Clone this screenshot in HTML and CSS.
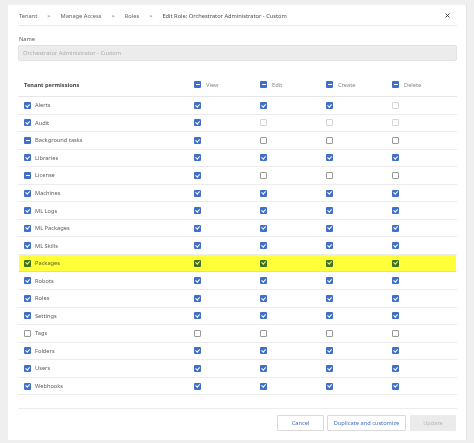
FILE: index.html
```html
<!DOCTYPE html>
<html lang="en">
<head>
<meta charset="utf-8">
<title>Edit Role</title>
<link rel="stylesheet" href="styles.css">
</head>
<body>
<div class="panel">
  <div class="crumbs">
    <span>Tenant</span><span class="sep">&gt;</span>
    <span>Manage Access</span><span class="sep">&gt;</span>
    <span>Roles</span><span class="sep">&gt;</span>
    <span class="cur">Edit Role: Orchestrator Administrator - Custom</span>
    <svg class="close" width="5" height="5" viewBox="0 0 5 5"><path d="M0.6 0.6 L4.4 4.4 M4.4 0.6 L0.6 4.4" stroke="#444" stroke-width="1"/></svg>
  </div>

  <div class="name-label">Name</div>
  <div class="input">Orchestrator Administrator - Custom</div>

  <div class="table">
    <div class="row head">
      <div class="c0 bold">Tenant permissions</div>
      <div class="cc"><span class="cb mid"></span><span class="hl-label">View</span></div>
      <div class="cc"><span class="cb mid"></span><span class="hl-label">Edit</span></div>
      <div class="cc"><span class="cb mid"></span><span class="hl-label">Create</span></div>
      <div class="cc"><span class="cb mid"></span><span class="hl-label">Delete</span></div>
    </div>

    <div class="row"><div class="c0"><span class="cb on"></span>Alerts</div><div class="cc"><span class="cb on"></span></div><div class="cc"><span class="cb on"></span></div><div class="cc"><span class="cb on"></span></div><div class="cc"><span class="cb dis"></span></div></div>
    <div class="row"><div class="c0"><span class="cb on"></span>Audit</div><div class="cc"><span class="cb on"></span></div><div class="cc"><span class="cb dis"></span></div><div class="cc"><span class="cb dis"></span></div><div class="cc"><span class="cb dis"></span></div></div>
    <div class="row"><div class="c0"><span class="cb mid"></span>Background tasks</div><div class="cc"><span class="cb on"></span></div><div class="cc"><span class="cb off"></span></div><div class="cc"><span class="cb off"></span></div><div class="cc"><span class="cb off"></span></div></div>
    <div class="row"><div class="c0"><span class="cb on"></span>Libraries</div><div class="cc"><span class="cb on"></span></div><div class="cc"><span class="cb on"></span></div><div class="cc"><span class="cb on"></span></div><div class="cc"><span class="cb on"></span></div></div>
    <div class="row"><div class="c0"><span class="cb mid"></span>License</div><div class="cc"><span class="cb on"></span></div><div class="cc"><span class="cb off"></span></div><div class="cc"><span class="cb off"></span></div><div class="cc"><span class="cb off"></span></div></div>
    <div class="row"><div class="c0"><span class="cb on"></span>Machines</div><div class="cc"><span class="cb on"></span></div><div class="cc"><span class="cb on"></span></div><div class="cc"><span class="cb on"></span></div><div class="cc"><span class="cb on"></span></div></div>
    <div class="row"><div class="c0"><span class="cb on"></span>ML Logs</div><div class="cc"><span class="cb on"></span></div><div class="cc"><span class="cb on"></span></div><div class="cc"><span class="cb on"></span></div><div class="cc"><span class="cb on"></span></div></div>
    <div class="row"><div class="c0"><span class="cb on"></span>ML Packages</div><div class="cc"><span class="cb on"></span></div><div class="cc"><span class="cb on"></span></div><div class="cc"><span class="cb on"></span></div><div class="cc"><span class="cb on"></span></div></div>
    <div class="row"><div class="c0"><span class="cb on"></span>ML Skills</div><div class="cc"><span class="cb on"></span></div><div class="cc"><span class="cb on"></span></div><div class="cc"><span class="cb on"></span></div><div class="cc"><span class="cb on"></span></div></div>
    <div class="row hl"><div class="c0"><span class="cb on"></span>Packages</div><div class="cc"><span class="cb on"></span></div><div class="cc"><span class="cb on"></span></div><div class="cc"><span class="cb on"></span></div><div class="cc"><span class="cb on"></span></div></div>
    <div class="row"><div class="c0"><span class="cb on"></span>Robots</div><div class="cc"><span class="cb on"></span></div><div class="cc"><span class="cb on"></span></div><div class="cc"><span class="cb on"></span></div><div class="cc"><span class="cb on"></span></div></div>
    <div class="row"><div class="c0"><span class="cb on"></span>Roles</div><div class="cc"><span class="cb on"></span></div><div class="cc"><span class="cb on"></span></div><div class="cc"><span class="cb on"></span></div><div class="cc"><span class="cb on"></span></div></div>
    <div class="row"><div class="c0"><span class="cb on"></span>Settings</div><div class="cc"><span class="cb on"></span></div><div class="cc"><span class="cb on"></span></div><div class="cc"><span class="cb on"></span></div><div class="cc"><span class="cb on"></span></div></div>
    <div class="row"><div class="c0"><span class="cb off"></span>Tags</div><div class="cc"><span class="cb off"></span></div><div class="cc"><span class="cb off"></span></div><div class="cc"><span class="cb off"></span></div><div class="cc"><span class="cb off"></span></div></div>
    <div class="row"><div class="c0"><span class="cb on"></span>Folders</div><div class="cc"><span class="cb on"></span></div><div class="cc"><span class="cb on"></span></div><div class="cc"><span class="cb on"></span></div><div class="cc"><span class="cb on"></span></div></div>
    <div class="row"><div class="c0"><span class="cb on"></span>Users</div><div class="cc"><span class="cb on"></span></div><div class="cc"><span class="cb on"></span></div><div class="cc"><span class="cb on"></span></div><div class="cc"><span class="cb on"></span></div></div>
    <div class="row"><div class="c0"><span class="cb on"></span>Webhooks</div><div class="cc"><span class="cb on"></span></div><div class="cc"><span class="cb on"></span></div><div class="cc"><span class="cb on"></span></div><div class="cc"><span class="cb on"></span></div></div>
  </div>

  <div class="footer">
    <button class="btn">Cancel</button>
    <button class="btn dup">Duplicate and customize</button>
    <button class="btn update">Update</button>
  </div>
</div>
</body>
</html>
```

FILE: styles.css
```css
html, body {
  margin: 0;
  padding: 0;
}
body {
  background: #efefef;
  font-family: "Noto Sans", "Open Sans", sans-serif;
  font-size: 5.7px;
  color: #5c5c5c;
  width: 474px;
  height: 443px;
  overflow: hidden;
  padding-top: 6px;
  box-sizing: border-box;
}
.panel {
  margin-left: 8px;
  width: 459px;
  height: 435px;
  box-sizing: border-box;
  background: #fff;
  border-right: 1px solid #e2e2e2;
  padding: 0 9px 0 10px;
}
.crumbs {
  height: 19px;
  display: flex;
  align-items: center;
  gap: 9px;
  border-bottom: 1px solid #ebebeb;
  padding-left: 1px;
  color: #5e5e5e;
  padding-top: 1px;
  box-sizing: content-box;
  margin-top: -1px;
}
.crumbs .sep {
  color: #555;
  margin: 0 1px;
}
.crumbs .cur {
  color: #4e4e4e;
}
.close {
  margin-left: auto;
  margin-right: 7px;
  display: block;
}
.name-label {
  padding-top: 9px;
  height: 8px;
  line-height: 8px;
  padding-left: 1px;
  color: #606060;
}
.input {
  margin-top: 2px;
  height: 16px;
  box-sizing: border-box;
  background: #ececec;
  border: 1px solid #e3e3e3;
  border-radius: 2px;
  padding-left: 4px;
  line-height: 14px;
  color: #adadad;
}
.table {
  margin-top: 12px;
}
.row {
  display: grid;
  grid-template-columns: 176px 66px 66px 66px 66px;
  height: 17.56px;
  box-sizing: border-box;
  border-bottom: 1px solid #ececec;
  align-items: center;
  position: relative;
}
.row.head {
  height: 24px;
  border-bottom: 1px solid #e6e6e6;
}
.c0 {
  display: flex;
  align-items: center;
  padding-left: 6px;
  gap: 4px;
}
.c0.bold {
  font-weight: 700;
  color: #444;
}
.cc {
  display: flex;
  align-items: center;
  gap: 5px;
}
.hl-label {
  color: #888;
}
.cb {
  width: 7px;
  height: 7px;
  box-sizing: border-box;
  border-radius: 1px;
  display: inline-block;
  position: relative;
  flex: none;
}
.cb.on, .cb.mid {
  background: #3f6fc6;
}
.cb.on::after {
  content: "";
  position: absolute;
  left: 2.4px;
  top: 0.8px;
  width: 1.6px;
  height: 3.4px;
  border: solid #fff;
  border-width: 0 1px 1px 0;
  transform: rotate(42deg);
}
.cb.mid::after {
  content: "";
  position: absolute;
  left: 1.5px;
  top: 3px;
  width: 4px;
  height: 1px;
  background: #fff;
}
.cb.off {
  background: #fff;
  border: 1px solid #999;
}
.cb.dis {
  background: #fff;
  border: 1px solid #d6d6d6;
}
.row.hl::after {
  content: "";
  position: absolute;
  left: 1px;
  right: 1px;
  top: 0;
  bottom: -1px;
  background: #ffff3a;
  mix-blend-mode: multiply;
  pointer-events: none;
}
.footer {
  margin-top: 13px;
  border-top: 1px solid #ececec;
  padding-top: 6px;
  display: flex;
  justify-content: flex-end;
  gap: 3px;
  padding-right: 1px;
}
.btn {
  font-family: inherit;
  font-size: 5.7px;
  height: 16px;
  padding: 0;
  border: 1px solid #d9d9d9;
  border-radius: 1px;
  background: #fff;
  color: #3f6fc6;
  cursor: pointer;
}
.btn:first-child {
  width: 47px;
}
.btn.dup {
  width: 79px;
}
.btn.update {
  width: 46px;
  margin-left: 1px;
  background: #ebebeb;
  border-color: #ebebeb;
  color: #b8b8b8;
}
```
